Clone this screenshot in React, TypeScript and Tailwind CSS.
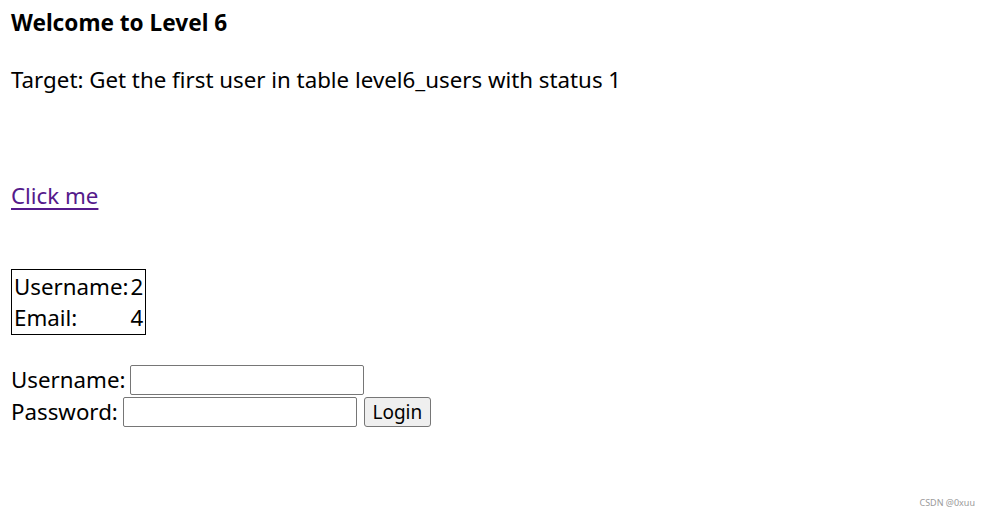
export default function App() {
  return (
    <div className="relative h-[515px] w-[990px] overflow-hidden bg-white font-['Noto_Sans',sans-serif] text-[22.3px] text-black">
      <div className="px-[11px]">
        <h3 className="mt-[8px] h-[30px] text-[22.6px] font-bold leading-[30px]">Welcome to Level 6</h3>
        <p className="mt-[27px] h-[30px] leading-[30px]">
          Target: Get the first user in table level6_users with status 1
        </p>
        <a href="#" className="mt-[86px] block h-[30px] w-fit leading-[30px] text-[#551a8b] underline underline-offset-[4px]">
          Click me
        </a>

        <div className="mt-[58px] grid w-fit grid-cols-[auto_auto] gap-x-[2px] border border-black p-[1px] px-[2px]">
          <span className="h-[31px] leading-[31px]">Username:</span>
          <span className="h-[31px] text-right leading-[31px]">2</span>
          <span className="h-[31px] leading-[31px]">Email:</span>
          <span className="h-[31px] text-right leading-[31px]">4</span>
        </div>

        <form className="mt-[29px] flex flex-col gap-[1px]" onSubmit={(e) => e.preventDefault()}>
          <div className="flex h-[31px] items-center gap-[5px]">
            <label className="leading-[30px]">Username:</label>
            <input
              type="text"
              className="h-[30px] w-[234px] rounded-[2px] border border-[#767676] bg-white px-1 text-[18px]"
            />
          </div>
          <div className="flex h-[31px] items-center gap-[5px]">
            <label className="leading-[30px]">Password:</label>
            <input
              type="password"
              className="h-[30px] w-[234px] rounded-[2px] border border-[#767676] bg-white px-1 text-[18px]"
            />
            <button
              type="submit"
              className="ml-[2px] h-[30px] w-[67px] rounded-[3px] border border-[#767676] bg-[#efefef] text-[19px] leading-[28px]"
            >
              Login
            </button>
          </div>
        </form>
      </div>

      <span className="absolute right-[15px] bottom-[6px] text-[9px] text-[#9a9a9a]">CSDN @0xuu</span>
    </div>
  );
}
